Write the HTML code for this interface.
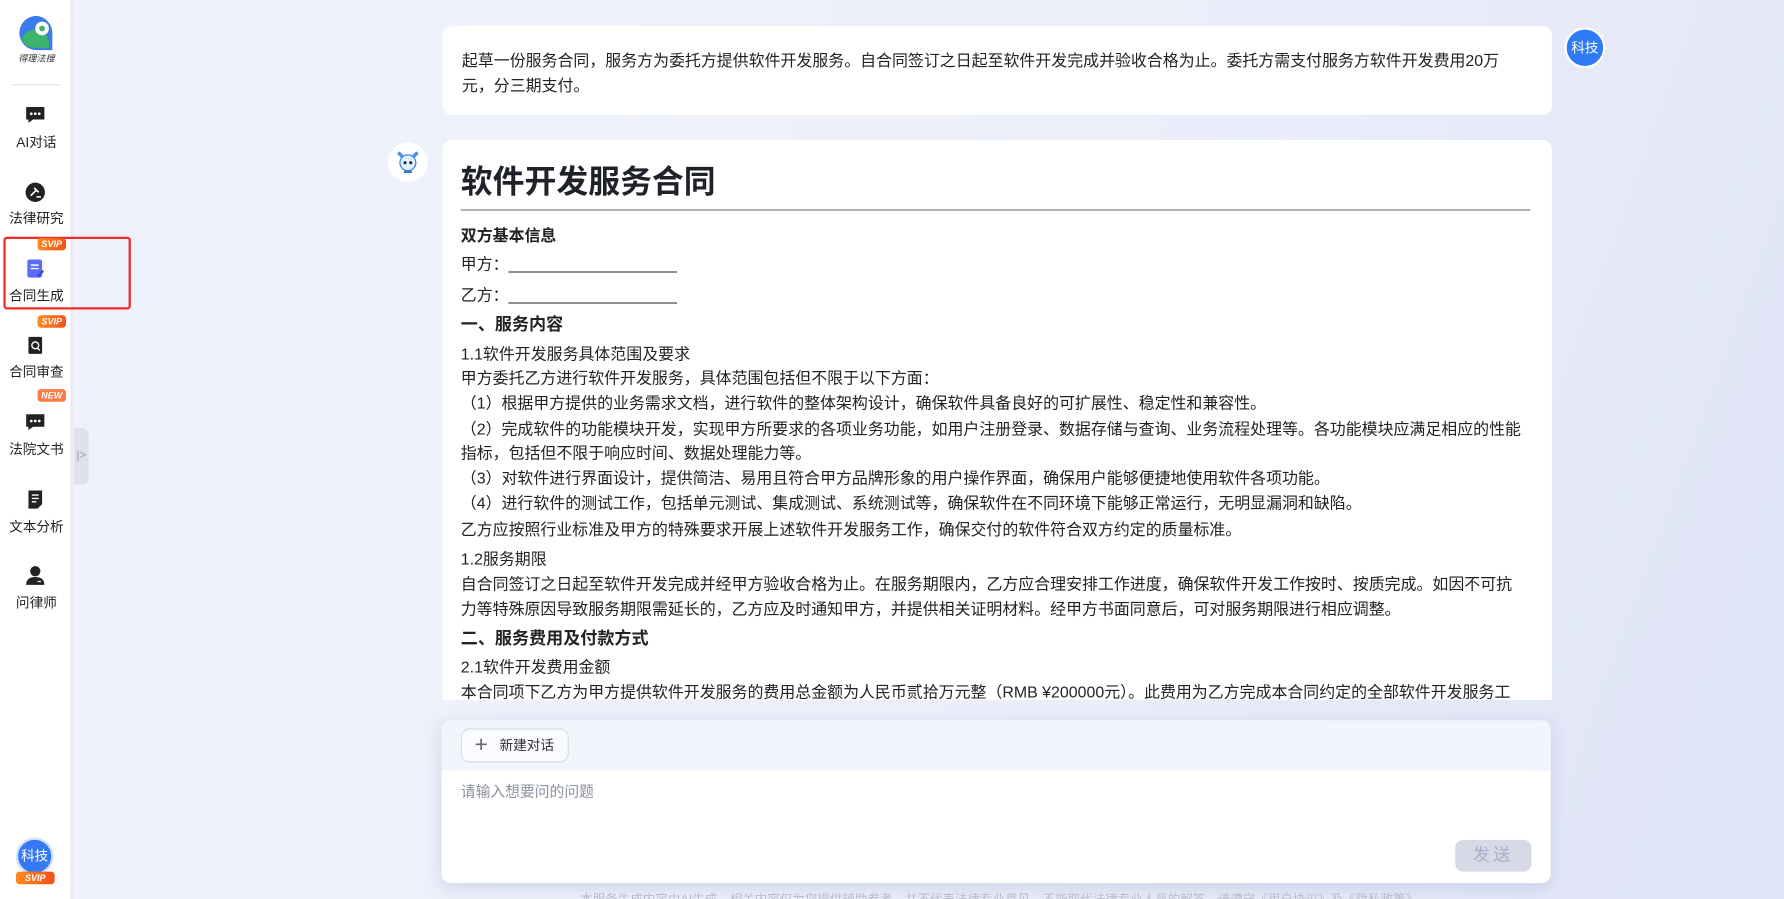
<!DOCTYPE html>
<html><head><meta charset="utf-8"><style>
*{margin:0;padding:0;box-sizing:border-box}
html,body{width:1784px;height:899px;overflow:hidden}
body{font-family:"Liberation Sans","Noto Sans CJK SC",sans-serif;color:#222}
#w{position:absolute;left:0;top:0;width:1568px;height:790px;transform:scale(1.13776,1.13797);transform-origin:0 0;overflow:hidden;background:linear-gradient(110deg,#f1f3fb 0%,#eceffa 55%,#dfe4f7 100%)}
.side{position:absolute;left:0;top:0;width:64px;height:790px;background:#fff;border-right:2px solid #e6e8f0}
.it{position:absolute;left:0;width:64px;text-align:center;font-size:12px;color:#222}
.ic{position:absolute;left:22px;width:18px;height:18px}
.badge{position:absolute;left:33px;width:25px;height:11px;border-radius:3px;background:linear-gradient(90deg,#ff8a1e,#f2521b);color:#fff;font-size:8px;font-weight:bold;font-style:italic;line-height:11px;text-align:center}
.abs{position:absolute}
.box{position:absolute;background:#fff;border-radius:8px}
.c{position:absolute;left:16px;font-size:14px;white-space:nowrap;color:#222}
.b{font-weight:bold;font-size:15px}
</style></head><body><div id="w">
<div class="side">
 <svg class="abs" style="left:15px;top:12px" width="34" height="34" viewBox="0 0 34 34"><path d="M17 2a15 15 0 1 0 0 30h14V17A15 15 0 0 0 17 2z" fill="#3a7bea"/><path d="M4 22c4-8 12-10 18-6 5 3 7 8 6 14H17C10 30 5 27 4 22z" fill="#3fb36a"/><circle cx="22" cy="13" r="6" fill="#fff"/><circle cx="22" cy="13" r="2.5" fill="#3fb36a"/></svg>
 <div class="it" style="top:46px;font-size:8px;font-style:italic;color:#333">得理法搜</div>
 <div class="abs" style="left:10px;top:74px;width:44px;height:1px;background:#e5e5e5"></div>
 <svg class="ic" style="top:92px" viewBox="0 0 18 18"><path d="M1 2h16v11H7l-4 3v-3H1z" fill="#222"/><circle cx="5.5" cy="8" r="1.2" fill="#fff"/><circle cx="9" cy="8" r="1.2" fill="#fff"/><circle cx="12.5" cy="8" r="1.2" fill="#fff"/></svg>
 <div class="it" style="top:116px">AI对话</div>
 <svg class="ic" style="top:160px" viewBox="0 0 18 18"><circle cx="9" cy="9" r="8.5" fill="#222"/><path d="M5 12l5-5M8 5l4 4M10 13h4" stroke="#fff" stroke-width="1.4"/></svg>
 <div class="it" style="top:183px">法律研究</div>
 <div class="abs" style="left:3px;top:208px;width:112px;height:64px;border:2px solid #f02a2a;border-radius:3px"></div>
 <div class="badge" style="top:209px">SVIP</div>
 <svg class="ic" style="top:227px" viewBox="0 0 18 18"><rect x="2" y="1" width="13" height="16" rx="2" fill="#5c6cf5"/><path d="M5 6h7M5 9h7" stroke="#fff" stroke-width="1.3"/><path d="M11 16l5-5" stroke="#3a48d8" stroke-width="2"/></svg>
 <div class="it" style="top:251px">合同生成</div>
 <div class="badge" style="top:277px">SVIP</div>
 <svg class="ic" style="top:294px" viewBox="0 0 18 18"><rect x="3" y="2" width="12" height="15" rx="1" fill="#222"/><circle cx="9" cy="9.5" r="3" fill="none" stroke="#fff" stroke-width="1.2"/><path d="M11 12l2 2" stroke="#fff" stroke-width="1.2"/></svg>
 <div class="it" style="top:318px">合同审查</div>
 <div class="badge" style="top:342px;background:#ff7a45">NEW</div>
 <svg class="ic" style="top:362px" viewBox="0 0 18 18"><path d="M1 2h16v11H7l-4 3v-3H1z" fill="#222"/><circle cx="5.5" cy="8" r="1.2" fill="#fff"/><circle cx="9" cy="8" r="1.2" fill="#fff"/><circle cx="12.5" cy="8" r="1.2" fill="#fff"/></svg>
 <div class="it" style="top:386px">法院文书</div>
 <svg class="ic" style="top:430px" viewBox="0 0 18 18"><path d="M3 1h12v12l-4 4H3z" fill="#222"/><path d="M6 5h6M6 8h6M6 11h4" stroke="#fff" stroke-width="1.2"/></svg>
 <div class="it" style="top:454px">文本分析</div>
 <svg class="ic" style="top:497px" viewBox="0 0 18 18"><circle cx="9" cy="5" r="4.5" fill="#222"/><path d="M1 17c0-5 3-7 8-7s8 2 8 7z" fill="#222"/><path d="M11 14h3" stroke="#fff"/></svg>
 <div class="it" style="top:521px">问律师</div>
 <div class="abs" style="left:14px;top:736px;width:33px;height:33px;border-radius:50%;background:#3478f6;border:2px solid #cfe0ff;color:#fff;font-size:12px;line-height:29px;text-align:center">科技</div>
 <div class="badge" style="left:14px;top:766px;width:34px">SVIP</div>
</div>
<div class="abs" style="left:65px;top:376px;width:13px;height:50px;background:#dfe2ec;border-radius:0 6px 6px 0;color:#999;font-size:10px;line-height:50px;text-align:center">|&gt;</div>

<div class="box" style="left:389px;top:23px;width:975px;height:78px">
 <div class="c" style="left:17px;top:19px;line-height:22px">起草一份服务合同，服务方为委托方提供软件开发服务。自合同签订之日起至软件开发完成并验收合格为止。委托方需支付服务方软件开发费用20万<br>元，分三期支付。</div>
</div>
<div class="abs" style="left:1375px;top:24px;width:36px;height:36px;border-radius:50%;background:#2f7bf7;border:2px solid #fff;color:#fff;font-size:12px;line-height:32px;text-align:center">科技</div>

<div class="abs" style="left:341px;top:125px;width:35px;height:35px;border-radius:50%;background:#fff"><svg width="35" height="35" viewBox="0 0 35 35"><path d="M9 9l5 5M26 9l-5 5" stroke="#4a8fe0" stroke-width="3"/><circle cx="17.5" cy="18" r="7" fill="#dfefff" stroke="#3a78d0"/><circle cx="15" cy="18" r="1.3" fill="#123"/><circle cx="20" cy="18" r="1.3" fill="#123"/><path d="M14 26h7" stroke="#3a78d0" stroke-width="2"/></svg></div>

<div class="abs" style="left:389px;top:123px;width:975px;height:492px;overflow:hidden">
<div class="box" style="left:0;top:0;width:975px;height:600px">
 <div class="c" style="top:18px;font-size:28px;line-height:38px;font-weight:bold;color:#1f2329">软件开发服务合同</div>
 <div class="abs" style="left:16px;top:61px;width:940px;height:1px;background:#777"></div>
 <div class="c b" style="top:74px;font-size:14px">双方基本信息</div>
 <div class="c" style="top:99px">甲方：___________________</div>
 <div class="c" style="top:126px">乙方：___________________</div>
 <div class="c b" style="top:151px">一、服务内容</div>
 <div class="c" style="top:178px">1.1软件开发服务具体范围及要求</div>
 <div class="c" style="top:199px">甲方委托乙方进行软件开发服务，具体范围包括但不限于以下方面：</div>
 <div class="c" style="top:221px">（1）根据甲方提供的业务需求文档，进行软件的整体架构设计，确保软件具备良好的可扩展性、稳定性和兼容性。</div>
 <div class="c" style="top:244px">（2）完成软件的功能模块开发，实现甲方所要求的各项业务功能，如用户注册登录、数据存储与查询、业务流程处理等。各功能模块应满足相应的性能</div>
 <div class="c" style="top:265px">指标，包括但不限于响应时间、数据处理能力等。</div>
 <div class="c" style="top:287px">（3）对软件进行界面设计，提供简洁、易用且符合甲方品牌形象的用户操作界面，确保用户能够便捷地使用软件各项功能。</div>
 <div class="c" style="top:309px">（4）进行软件的测试工作，包括单元测试、集成测试、系统测试等，确保软件在不同环境下能够正常运行，无明显漏洞和缺陷。</div>
 <div class="c" style="top:332px">乙方应按照行业标准及甲方的特殊要求开展上述软件开发服务工作，确保交付的软件符合双方约定的质量标准。</div>
 <div class="c" style="top:358px">1.2服务期限</div>
 <div class="c" style="top:380px">自合同签订之日起至软件开发完成并经甲方验收合格为止。在服务期限内，乙方应合理安排工作进度，确保软件开发工作按时、按质完成。如因不可抗</div>
 <div class="c" style="top:402px">力等特殊原因导致服务期限需延长的，乙方应及时通知甲方，并提供相关证明材料。经甲方书面同意后，可对服务期限进行相应调整。</div>
 <div class="c b" style="top:427px">二、服务费用及付款方式</div>
 <div class="c" style="top:453px">2.1软件开发费用金额</div>
 <div class="c" style="top:475px">本合同项下乙方为甲方提供软件开发服务的费用总金额为人民币贰拾万元整（RMB ¥200000元）。此费用为乙方完成本合同约定的全部软件开发服务工</div>
</div></div>

<div class="abs" style="left:388px;top:633px;width:975px;height:143px;border-radius:8px;background:#fff;box-shadow:0 4px 14px rgba(120,130,180,.25);overflow:hidden">
 <div class="abs" style="left:0;top:0;width:975px;height:44px;background:#f3f5fd"></div>
 <div class="abs" style="left:17px;top:7px;width:95px;height:30px;border:1px solid #d8dbe6;border-radius:8px;background:#fafbff;font-size:12px;color:#333;line-height:28px;padding-left:33px">新建对话</div>
 <div class="abs" style="left:29px;top:13px;font-size:20px;color:#666;line-height:18px;font-weight:300">+</div>
 <div class="abs" style="left:17px;top:52px;font-size:13px;color:#8a90a0">请输入想要问的问题</div>
 <div class="abs" style="left:891px;top:105px;width:67px;height:28px;border-radius:7px;background:#d7dae6;color:#a7aecb;font-size:15px;line-height:28px;text-align:center;letter-spacing:3px">发送</div>
</div>
<div class="abs" style="left:510px;top:782px;font-size:11px;color:#b8bccb;white-space:nowrap">本服务生成内容由AI生成，相关内容仅为您提供辅助参考，并不代表法律专业意见，不能取代法律专业人员的解答。请遵守《用户协议》及《隐私政策》</div>
</div></body></html>
